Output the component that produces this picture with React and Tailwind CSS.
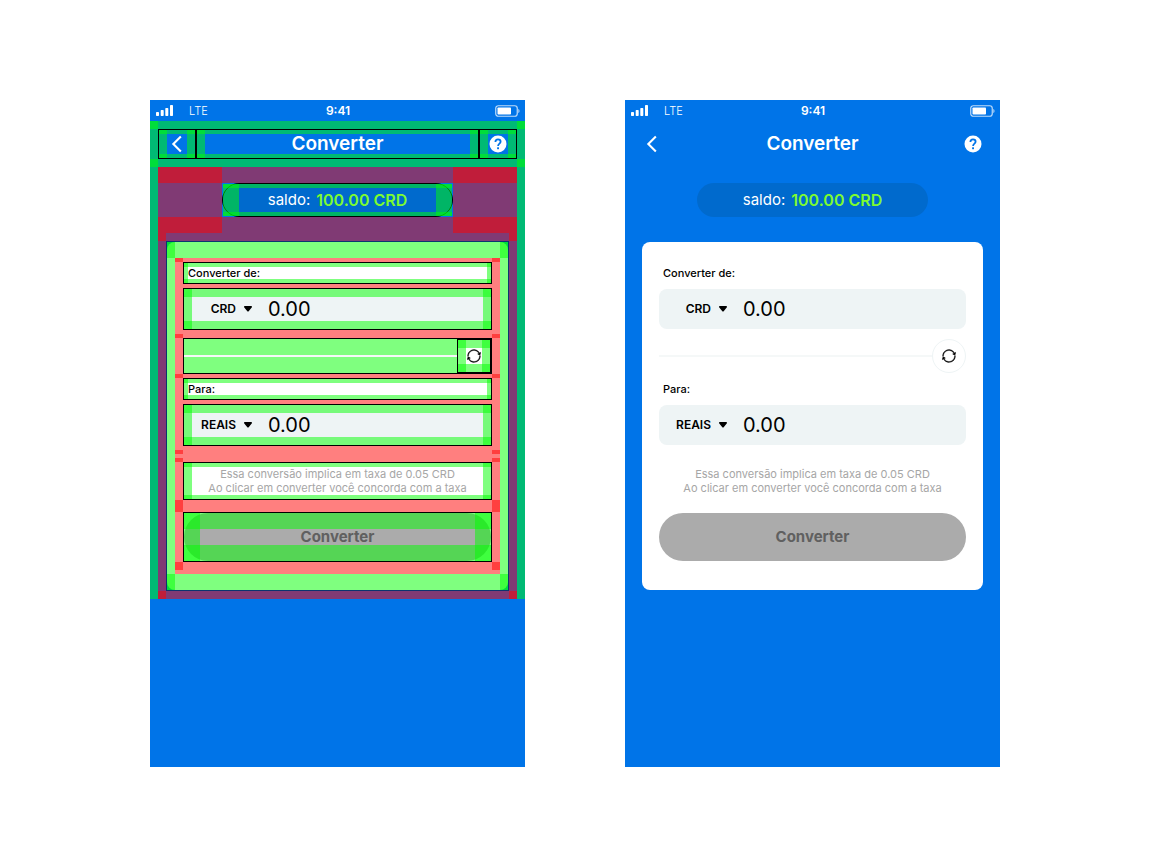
import React, { createContext, useContext, useId } from 'react';
import { IoIosSync } from 'react-icons/io';

// true when the screen is drawn with its box model on top
const SpecContext = createContext(false);

const layer = 'pointer-events-none absolute inset-0';

function Padding({ x = '', y = '' }) {
  const spec = useContext(SpecContext);
  if (!spec) return null;
  return (
    <>
      <span className={`${layer} border-[#00ff00]/50 ${x}`} />
      <span className={`${layer} border-[#00ff00]/50 ${y}`} />
    </>
  );
}

function Margin({ x = '', y = '' }) {
  const spec = useContext(SpecContext);
  if (!spec) return null;
  return (
    <>
      <span className={`${layer} border-[#ff0000]/50 ${x}`} />
      <span className={`${layer} border-[#ff0000]/50 ${y}`} />
    </>
  );
}

// element with a one pixel outline, visible only in the spec
function Box({ className = '', children }) {
  const spec = useContext(SpecContext);
  return (
    <div className={`relative border ${spec ? 'border-black' : 'border-transparent'} ${className}`}>
      {children}
    </div>
  );
}

function StatusBar() {
  return (
    <div className="grid h-[21px] grid-cols-3 items-center pl-[6px] pr-[5px] text-white">
      <div className="flex items-center gap-4">
        <svg width="17" height="11" viewBox="0 0 17 11" fill="currentColor">
          <rect x="0" y="7" width="3" height="4" rx="0.7" />
          <rect x="4.7" y="5" width="3" height="6" rx="0.7" />
          <rect x="9.3" y="3" width="3" height="8" rx="0.7" />
          <rect x="14" y="0" width="3" height="11" rx="0.7" />
        </svg>
        <span className="text-[11px] leading-4 font-light">LTE</span>
      </div>
      <span className="text-center text-[12px] leading-4 font-semibold">9:41</span>
      <svg className="justify-self-end" width="25" height="12" viewBox="0 0 25 12" fill="none">
        <rect x="0.75" y="0.75" width="21.5" height="10.5" rx="2.5" stroke="white" strokeOpacity="0.75" strokeWidth="1.2" />
        <rect x="2.5" y="2.5" width="13.5" height="7" rx="0.8" fill="white" />
        <path d="M23.2 4v4c1-.3 1.4-1.1 1.4-2s-.4-1.7-1.4-2z" fill="white" fillOpacity="0.6" />
      </svg>
    </div>
  );
}

function Header() {
  return (
    <header className="relative flex p-2">
      <Box>
        <button type="button" aria-label="Voltar" className="block px-2 py-1 text-white">
          <svg width="20" height="20" viewBox="0 0 24 24" fill="currentColor">
            <path d="M17.51 3.87 15.73 2.1 5.84 12l9.9 9.9 1.77-1.77L9.38 12z" />
          </svg>
        </button>
        <Padding x="border-x-8" y="border-y-4" />
      </Box>
      <Box className="flex-1">
        <h1 className="px-2 py-1 text-center text-[19px] leading-5 font-semibold text-white">Converter</h1>
        <Padding x="border-x-8" y="border-y-4" />
      </Box>
      <Box>
        <button type="button" aria-label="Ajuda" className="block px-2 py-1 text-white">
          <svg width="20" height="20" viewBox="0 0 20 20" fill="none">
            <circle cx="10" cy="10" r="8.5" fill="currentColor" />
            <path d="M7.4 8.1C7.4 6.4 8.5 5.4 10 5.4s2.6 1 2.6 2.4c0 1.8-2.5 2-2.5 4.2" stroke="#0074e8" strokeWidth="1.8" />
            <rect x="9.1" y="13.3" width="1.9" height="1.9" fill="#0074e8" />
          </svg>
        </button>
        <Padding x="border-x-8" y="border-y-4" />
      </Box>
      <Padding x="border-x-8" y="border-y-8" />
    </header>
  );
}

function Balance() {
  return (
    <div className="relative px-16 py-4">
      <Box className="rounded-full bg-[#006acd]">
        <p className="flex justify-center gap-[6px] px-4 py-1 text-[15px] leading-6 text-white">
          <span>saldo:</span>
          <strong className="text-[16px] font-semibold text-[#7dfb30]">100.00 CRD</strong>
        </p>
        <Padding x="border-x-[16px]" y="border-y-4" />
      </Box>
      <Margin x="border-x-[64px]" y="border-y-[16px]" />
    </div>
  );
}

function AmountField({ label, currency }) {
  const id = useId();
  return (
    <>
      <div className="relative px-2 pt-1">
        <Box>
          <label htmlFor={id} className="block p-1 text-[11px] leading-3 font-medium">{label}</label>
          <Padding x="border-x-4" y="border-y-4" />
        </Box>
        <Margin x="border-x-8" y="border-t-4" />
      </div>
      <div className="relative px-2 py-1">
        <Box>
          <div className="flex items-center rounded-lg bg-[#eef4f5] p-2">
            <select
              aria-label={`Moeda, ${label}`}
              defaultValue={currency}
              className="w-11 appearance-none bg-transparent text-right text-[12px] leading-6 font-semibold [text-align-last:right]"
            >
              <option>CRD</option>
              <option>REAIS</option>
            </select>
            <svg className="ml-2 shrink-0" width="8" height="6" viewBox="0 0 8 6" fill="currentColor">
              <path d="M1 0h6c.9 0 1.3 1 .7 1.6L4.7 5.2c-.4.4-1 .4-1.4 0L.3 1.6C-.3 1 .1 0 1 0z" />
            </svg>
            <input
              id={id}
              type="text"
              inputMode="decimal"
              defaultValue="0.00"
              className="ml-4 w-0 flex-1 bg-transparent text-[20px] leading-6 outline-none"
            />
          </div>
          <Padding x="border-x-8" y="border-y-8" />
        </Box>
        <Margin x="border-x-8 border-y-4" />
      </div>
    </>
  );
}

function SwapRow() {
  const spec = useContext(SpecContext);
  return (
    <div className="relative px-2 pt-1">
      <Box className="flex items-center">
        <div className="relative flex-1 py-4">
          <hr className="border-t-2 border-[#f5f8f8]" />
          <Padding y="border-y-[16px]" />
        </div>
        <div className={`relative border ${spec ? 'border-black' : 'rounded-full border-[#eef4f5]'}`}>
          <button type="button" aria-label="Inverter moedas" className="block p-2">
            <IoIosSync size={16} stroke="currentColor" strokeWidth={10} className="-rotate-30" />
          </button>
          <Padding x="border-x-8" y="border-y-8" />
        </div>
      </Box>
      <Margin x="border-x-8" y="border-t-4" />
    </div>
  );
}

function ConvertCard() {
  const spec = useContext(SpecContext);
  return (
    <div className="relative p-2">
      <div className={`relative border ${spec ? 'border-[#0a3470]' : 'border-transparent'}`}>
        <form className="rounded-lg bg-white px-2 py-4" onSubmit={(e) => e.preventDefault()}>
          <AmountField label="Converter de:" currency="CRD" />
          <SwapRow />
          <AmountField label="Para:" currency="REAIS" />
          <div className="relative h-1">
            <Margin x="border-x-8" y="border-t-4" />
          </div>
          <div className="relative h-1">
            <Margin y="border-t-4" />
          </div>
          <div className="relative px-2 pt-1">
            <Box>
              <p className="px-2 py-1 text-center text-[11px] leading-[14px] text-[#a6a6a6]">
                Essa conversão implica em taxa de 0.05 CRD
                <br />
                Ao clicar em converter você concorda com a taxa
              </p>
              <Padding x="border-x-8" y="border-y-4" />
            </Box>
            <Margin x="border-x-8" y="border-t-4" />
          </div>
          <div className="relative px-2 pt-3 pb-2">
            <Box>
              <button type="submit" className="block w-full rounded-full bg-[#ababab] p-4 text-[15px] leading-4 font-bold text-[#606060]">
                Converter
              </button>
              <Padding x="border-x-[16px]" y="border-y-[16px]" />
            </Box>
            <Margin x="border-x-8" y="border-t-[12px] border-b-8" />
          </div>
          <div className="relative h-1">
            <Margin y="border-t-4" />
          </div>
        </form>
        <Padding x="border-x-8" y="border-y-[16px]" />
      </div>
      <Margin x="border-x-8" y="border-y-8" />
    </div>
  );
}

function Screen({ spec = false }) {
  return (
    <SpecContext.Provider value={spec}>
      <section className="min-h-[667px] max-w-[375px] flex-1 bg-[#0074e8]">
        <StatusBar />
        <Header />
        <main className="relative px-2">
          <Balance />
          <ConvertCard />
          <Padding x="border-x-8" />
        </main>
      </section>
    </SpecContext.Provider>
  );
}

export default function App() {
  return (
    <div className="flex min-h-screen justify-center gap-[100px] bg-white py-[100px] font-[Inter,sans-serif] text-black">
      <Screen spec />
      <Screen />
    </div>
  );
}
